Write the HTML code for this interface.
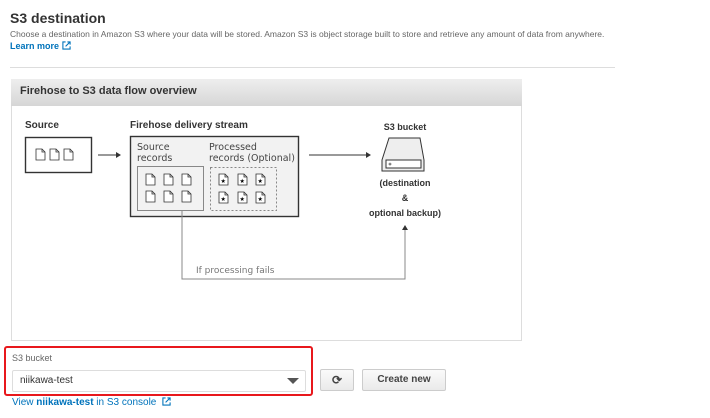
<!DOCTYPE html>
<html><head><style>
body{margin:0;width:710px;height:418px;background:#fff;font-family:"Liberation Sans",sans-serif;position:relative;overflow:hidden}
.a{position:absolute}
</style></head><body>
<div class="a" style="left:10px;top:10px;font-size:14px;font-weight:bold;color:#333">S3 destination</div>
<div class="a" style="left:10px;top:29px;font-size:8.5px;color:#666">Choose a destination in Amazon S3 where your data will be stored. Amazon S3 is object storage built to store and retrieve any amount of data from anywhere.</div>
<div class="a" style="left:10px;top:41px;font-size:9px;color:#0073bb;font-weight:bold">Learn more <svg width="9" height="9" viewBox="0 0 10 10" style="vertical-align:-1px"><path d="M4 1H1v8h8V6M6 1h3v3M9 1L4 6" fill="none" stroke="#0073bb" stroke-width="1.2"/></svg></div>
<div class="a" style="left:10px;top:67px;width:605px;height:1px;background:#ddd"></div>
<div class="a" style="left:11px;top:79px;width:511px;height:262px;border:1px solid #ddd;box-sizing:border-box"></div>
<div class="a" style="left:11px;top:79px;width:511px;height:27px;background:linear-gradient(#eee,#d6d6d6)"></div>
<div class="a" style="left:20px;top:85px;font-size:11px;font-weight:bold;color:#333">Firehose to S3 data flow overview</div>
<svg class="a" style="left:0;top:0" width="530" height="300" font-family="DejaVu Sans, sans-serif">
<defs><g id="d"><path d="M0 0h6l3 3v8H0z M6 0v3h3" fill="#fff" stroke="#333" stroke-width=".8"/></g>
<g id="s"><use href="#d"/><text x="1.5" y="9" font-size="6" fill="#000">★</text></g></defs>
<text x="25" y="128" font-size="10" font-weight="bold" fill="#333" font-family="Liberation Sans">Source</text>
<rect x="25.5" y="137.5" width="66" height="35" fill="#fff" stroke="#333" stroke-width="1.4"/>
<use href="#d" x="36" y="149"/><use href="#d" x="50" y="149"/><use href="#d" x="64" y="149"/>
<path d="M98 155h18" stroke="#333"/><path d="M116 152l5 3-5 3z" fill="#333"/>
<text x="130" y="128" font-size="10" font-weight="bold" fill="#333" font-family="Liberation Sans">Firehose delivery stream</text>
<rect x="130.5" y="136.5" width="168" height="80" fill="#f2f2f2" stroke="#333" stroke-width="1.4"/>
<text x="137" y="150" font-size="9.5" fill="#444">Source</text><text x="137" y="161" font-size="9.5" fill="#444">records</text>
<text x="209" y="150" font-size="9.5" fill="#444">Processed</text><text x="209" y="161" font-size="9.5" fill="#444">records (Optional)</text>
<rect x="137.5" y="166.5" width="66" height="44" fill="none" stroke="#888"/>
<rect x="210.5" y="167.5" width="66" height="43" fill="none" stroke="#888" stroke-dasharray="2 2"/>
<use href="#d" x="146" y="174"/><use href="#d" x="164" y="174"/><use href="#d" x="182" y="174"/>
<use href="#d" x="146" y="191"/><use href="#d" x="164" y="191"/><use href="#d" x="182" y="191"/>
<use href="#s" x="219" y="174"/><use href="#s" x="238" y="174"/><use href="#s" x="256" y="174"/>
<use href="#s" x="219" y="192"/><use href="#s" x="238" y="192"/><use href="#s" x="256" y="192"/>
<path d="M309 155h57" stroke="#333"/><path d="M366 152l5 3-5 3z" fill="#333"/>
<text x="405" y="130" font-size="9" font-weight="bold" fill="#333" text-anchor="middle" font-family="Liberation Sans">S3 bucket</text>
<path d="M389 138h31l4 22v11h-42v-11z" fill="#eee" stroke="#333"/>
<rect x="386" y="160" width="35" height="8" fill="#fff" stroke="#333"/><circle cx="390" cy="164" r="1" fill="none" stroke="#333" stroke-width=".6"/>
<g font-size="9" font-weight="bold" fill="#333" text-anchor="middle" font-family="Liberation Sans"><text x="405" y="186">(destination</text><text x="405" y="201">&amp;</text><text x="405" y="216">optional backup)</text></g>
<path d="M182 210v69h223v-50" fill="none" stroke="#888"/><path d="M402 230l3-5 3 5z" fill="#333"/>
<text x="196" y="273" font-size="9" fill="#777">If processing fails</text>
</svg>
<div class="a" style="left:4px;top:346px;width:309px;height:50px;border:2px solid #e8181c;border-radius:3px;box-sizing:border-box"></div>
<div class="a" style="left:12px;top:353px;font-size:9px;color:#666">S3 bucket</div>
<div class="a" style="left:12px;top:370px;width:294px;height:22px;border:1px solid #ddd;border-radius:2px;box-sizing:border-box;font-size:10px;color:#333;padding:4px 7px">niikawa-test</div>
<div class="a" style="left:287px;top:378px;width:0;height:0;border-left:6px solid transparent;border-right:6px solid transparent;border-top:6px solid #555"></div>
<div class="a" style="left:320px;top:369px;width:34px;height:22px;border:1px solid #ccc;border-radius:2px;box-sizing:border-box;background:linear-gradient(#fafafa,#eaeaea);text-align:center;font-size:12px;font-weight:bold;color:#444;line-height:20px">⟳</div>
<div class="a" style="left:362px;top:369px;width:84px;height:22px;border:1px solid #ccc;border-radius:2px;box-sizing:border-box;background:linear-gradient(#fafafa,#eaeaea);text-align:center;font-size:10px;font-weight:bold;color:#444;line-height:20px">Create new</div>
<div class="a" style="left:12px;top:397px;font-size:10px;color:#0073bb">View <b>niikawa-test</b> in S3 console &nbsp;<svg width="9" height="9" viewBox="0 0 10 10" style="vertical-align:-1px"><path d="M4 1H1v8h8V6M6 1h3v3M9 1L4 6" fill="none" stroke="#0073bb" stroke-width="1.2"/></svg></div>
</body></html>
